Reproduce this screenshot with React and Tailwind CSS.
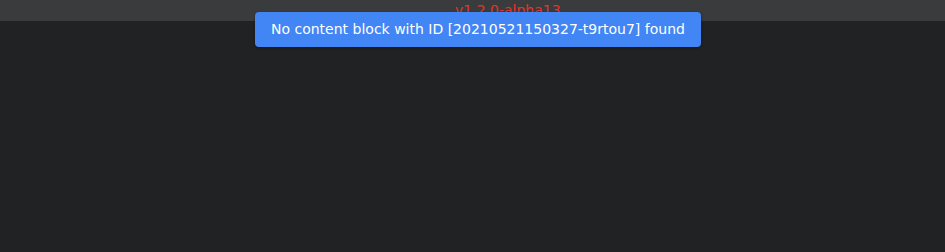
export default function App() {
  return (
    <div
      className="relative h-[252px] w-[945px] overflow-hidden bg-[#212224]"
      style={{ fontFamily: '"DejaVu Sans", sans-serif' }}
    >
      <div className="flex h-[21px] items-start bg-[#3a3b3c]">
        <span className="ml-[455px] text-[14px] leading-[20px] text-[#e0362c]">v1.2.0-alpha13</span>
      </div>
      <div className="absolute left-[255px] top-[12px] rounded-[4px] bg-[#4285f4] px-[16px] py-[8px] text-[14px] leading-[19px] text-white shadow-[0_1px_3px_rgba(0,0,0,0.4)]">
        No content block with ID [20210521150327-t9rtou7] found
      </div>
    </div>
  );
}
